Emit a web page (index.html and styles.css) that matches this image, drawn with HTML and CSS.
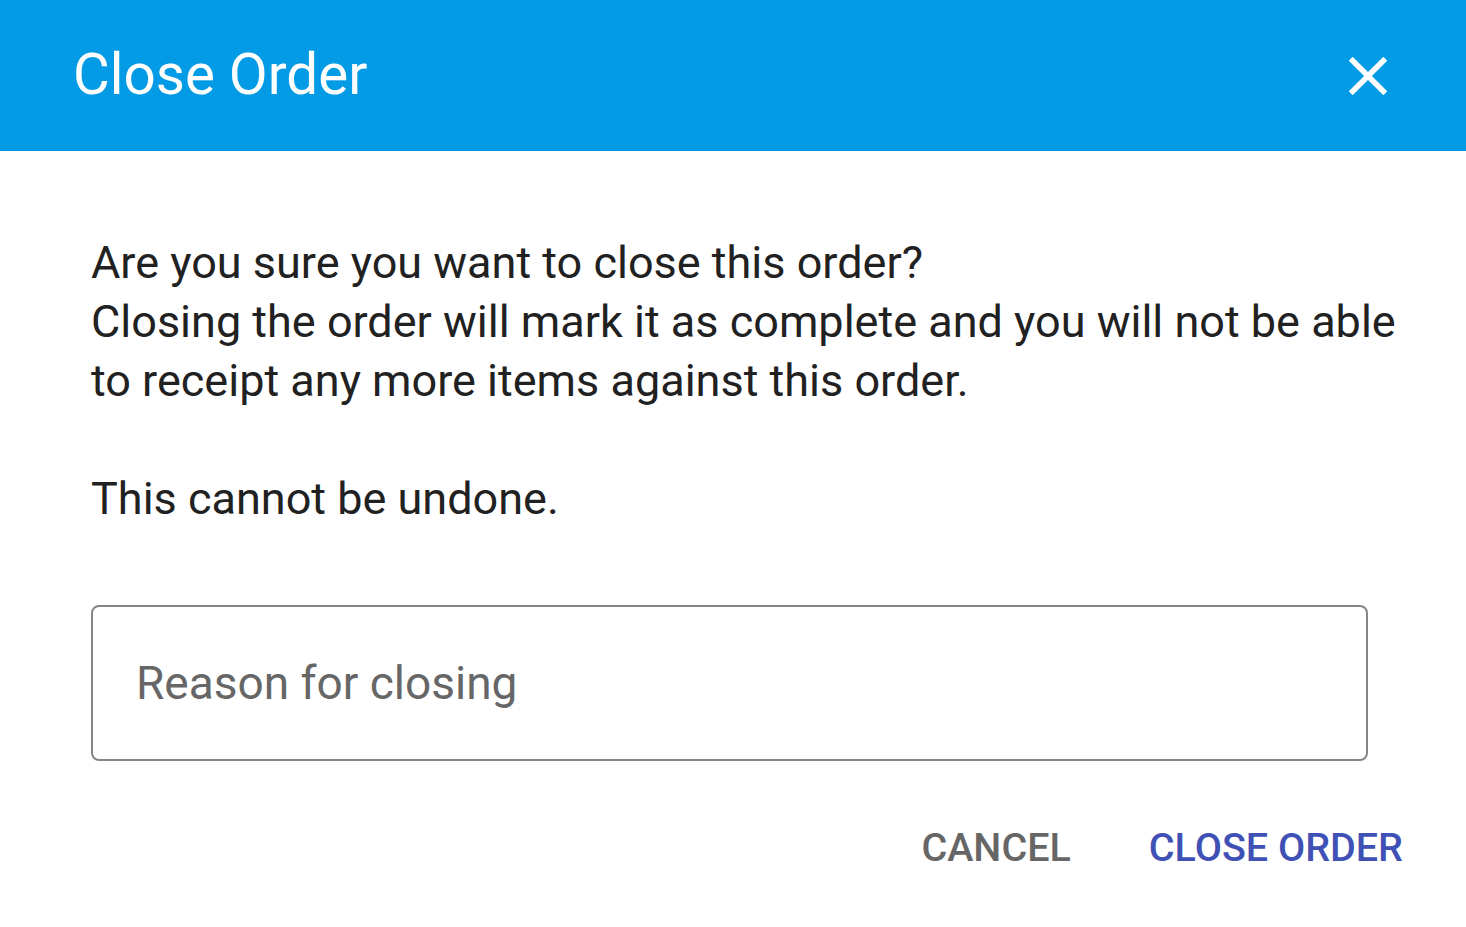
FILE: index.html
```html
<!DOCTYPE html>
<html lang="en">
<head>
<meta charset="utf-8">
<title>Close Order</title>
<link rel="stylesheet" href="styles.css">
</head>
<body>
<div class="dialog">
  <header class="dialog-header">
    <h1 class="dialog-title">Close Order</h1>
    <button class="icon-btn" aria-label="Close">
      <svg viewBox="0 0 24 24" width="66" height="66"><path fill="#fff" d="M19 6.41L17.59 5 12 10.59 6.41 5 5 6.41 10.59 12 5 17.59 6.41 19 12 13.41 17.59 19 19 17.59 13.41 12z"/></svg>
    </button>
  </header>
  <main class="dialog-content">
    <p class="message">Are you sure you want to close this order?<br>Closing the order will mark it as complete and you will not be able to receipt any more items against this order.<br><br>This cannot be undone.</p>
    <div class="field">
      <input class="field-input" type="text" placeholder="Reason for closing">
    </div>
  </main>
  <footer class="dialog-actions">
    <button class="text-btn cancel">CANCEL</button>
    <button class="text-btn primary">CLOSE ORDER</button>
  </footer>
</div>
</body>
</html>
```

FILE: styles.css
```css
* { box-sizing: border-box; }
html, body { margin: 0; padding: 0; background: #fff; }
body { font-family: Roboto, "Noto Sans", "Liberation Sans", sans-serif; }

.dialog { width: 1466px; height: 927px; display: flex; flex-direction: column; }

.dialog-header {
  height: 151px;
  background: #039be5;
  display: flex;
  align-items: center;
  justify-content: space-between;
  padding: 0 65px 0 73px;
}
.dialog-title {
  margin: 0;
  color: #fff;
  font-size: 56.5px;
  font-weight: 400;
  line-height: 1;
}
.icon-btn {
  border: 0; background: none; padding: 0; margin: 0;
  width: 66px; height: 66px; display: flex;
}

.dialog-content { padding: 82px 60px 0 91px; }
.message {
  margin: 0;
  font-size: 45px;
  line-height: 59px;
  color: #212121;
}
.field {
  margin-top: 77px;
  height: 156px;
  width: 1277px;
  border: 2px solid #858585;
  border-radius: 8px;
  display: flex;
  align-items: center;
  padding-left: 43px;
}
.field-input {
  border: 0; outline: none; width: 100%;
  font-family: inherit;
  font-size: 46px;
  line-height: 59px;
  color: #212121;
  padding: 0;
  background: transparent;
}
.field-input::placeholder { color: #666; opacity: 1; }

.dialog-actions {
  display: flex;
  justify-content: flex-end;
  gap: 78px;
  padding: 63px 63px 0 0;
}
.text-btn {
  border: 0; background: none; padding: 0;
  font-family: inherit;
  font-size: 39.5px;
  font-weight: 500;
  line-height: 48px;
  letter-spacing: 0;
}
.cancel { color: #666; }
.primary { color: #3f51b5; }
```
